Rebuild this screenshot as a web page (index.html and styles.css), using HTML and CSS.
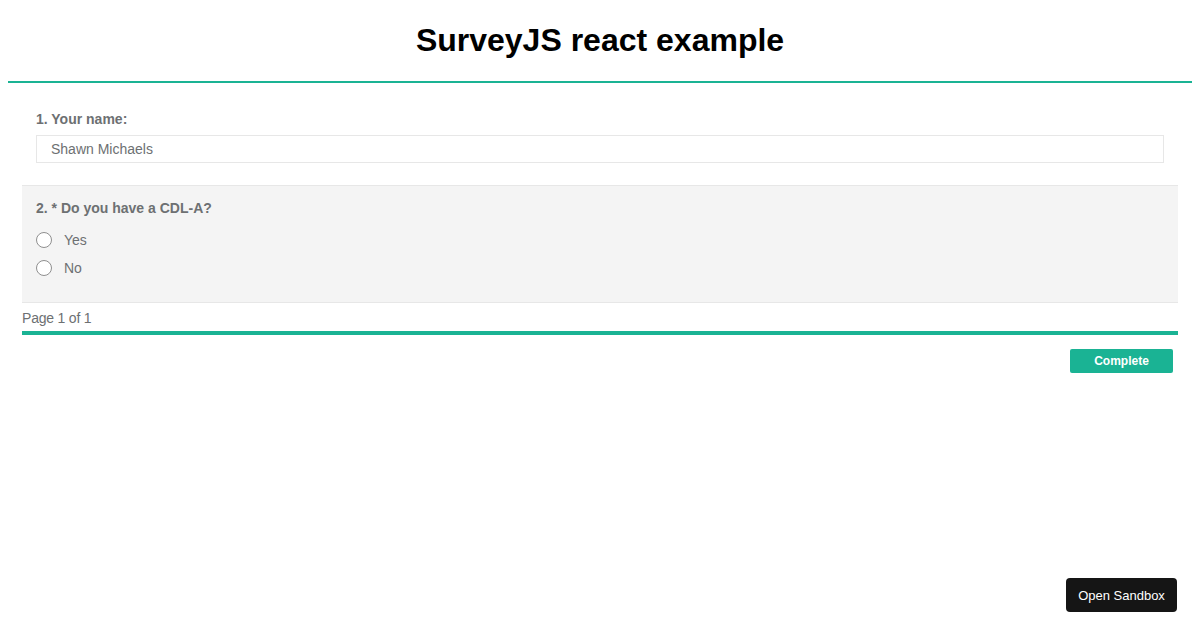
FILE: index.html
```html
<!DOCTYPE html>
<html lang="en">
<head>
<meta charset="utf-8">
<title>SurveyJS react example</title>
<link rel="stylesheet" href="styles.css">
</head>
<body>
<h1 class="title">SurveyJS react example</h1>
<div class="survey">
  <div class="survey-body">
    <div class="row">
      <div class="question">
        <h5 class="q-title">1. Your name:</h5>
        <div class="text-input">Shawn Michaels</div>
      </div>
    </div>
    <div class="row row-alt">
      <div class="question">
        <h5 class="q-title">2. * Do you have a CDL-A?</h5>
        <div class="choices">
          <label class="choice"><span class="radio"></span><span class="choice-label">Yes</span></label>
          <label class="choice"><span class="radio"></span><span class="choice-label">No</span></label>
        </div>
      </div>
    </div>
    <div class="progress">
      <span class="progress-text">Page 1 of 1</span>
      <div class="progress-bar"></div>
    </div>
    <div class="nav">
      <button class="complete-btn" type="button">Complete</button>
    </div>
  </div>
</div>
<button class="sandbox-btn" type="button">Open Sandbox</button>
</body>
</html>
```

FILE: styles.css
```css
html, body {
  background: #ffffff;
}
body {
  margin: 8px;
  font-family: "Liberation Sans", Arial, sans-serif;
}
.title {
  margin: 14px 0 22px;
  font-size: 32px;
  font-weight: bold;
  text-align: center;
  color: #000000;
  line-height: 37px;
}
.survey {
  border-top: 2px solid #1ab394;
  color: #6d7072;
  font-size: 14px;
}
.survey-body {
  padding: 14px 14px 23px;
}
.row {
  padding: 14px 14px 22px;
}
.row-alt {
  background: #f4f4f4;
  border-top: 1px solid #e7e7e7;
  border-bottom: 1px solid #e7e7e7;
  padding: 14px 14px 20px;
}
.q-title {
  margin: 0;
  font-size: 14px;
  font-weight: bold;
  line-height: 16px;
  color: #6d7072;
}
.text-input {
  margin-top: 8px;
  height: 26px;
  line-height: 26px;
  border: 1px solid #e7e7e7;
  background: #ffffff;
  padding: 0 14px;
  color: #6d7072;
}
.choices {
  margin-top: 10px;
  display: flex;
  flex-direction: column;
}
.choice {
  height: 28px;
  display: flex;
  align-items: center;
  gap: 12px;
}
.radio {
  width: 14px;
  height: 14px;
  border: 1px solid #8f8f8f;
  border-radius: 50%;
  background: #ffffff;
  flex: none;
}
.choice-label {
  color: #6d7072;
  line-height: 16px;
}
.progress {
  margin-top: 7px;
}
.progress-text {
  display: block;
  line-height: 16px;
  color: #6d7072;
  letter-spacing: -0.2px;
}
.progress-bar {
  margin-top: 5px;
  height: 4px;
  background: #1ab394;
}
.nav {
  display: flex;
  justify-content: flex-end;
  padding-right: 5px;
  margin-top: 14px;
}
.complete-btn {
  height: 24px;
  width: 103px;
  border: none;
  border-radius: 2px;
  background: #1ab394;
  color: #ffffff;
  font-family: "Liberation Sans", Arial, sans-serif;
  font-size: 12px;
  font-weight: bold;
  padding: 0;
  cursor: pointer;
}
.sandbox-btn {
  position: fixed;
  right: 23px;
  bottom: 18px;
  width: 111px;
  height: 34px;
  border: none;
  border-radius: 4px;
  background: #151515;
  color: #ffffff;
  font-family: "Liberation Sans", Arial, sans-serif;
  font-size: 13px;
  padding: 0;
}
```
